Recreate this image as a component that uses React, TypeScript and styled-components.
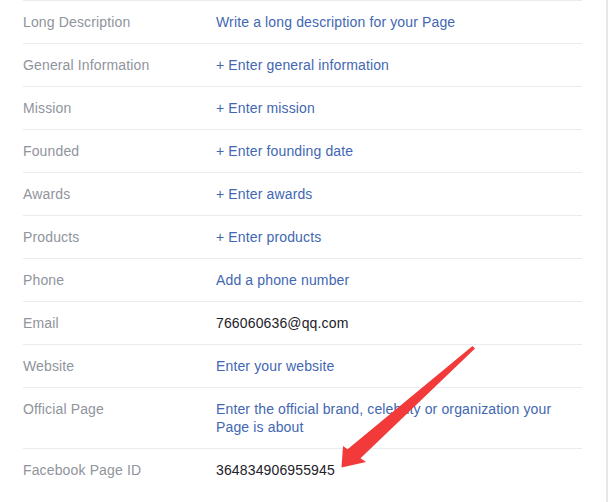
import styled, { createGlobalStyle } from "styled-components";

const Global = createGlobalStyle`
  html, body {
    margin: 0;
    padding: 0;
    background: #fff;
  }
  body {
    font-family: "Liberation Sans", Arial, Helvetica, sans-serif;
    font-size: 14px;
    letter-spacing: 0.14px;
  }
`;

const Page = styled.div`
  position: relative;
  width: 608px;
  height: 502px;
  overflow: hidden;
`;

const Card = styled.div`
  width: 583px;
  height: 502px;
  padding: 0 0 0 23px;
  border-right: 2px solid #e6e7eb;
  box-sizing: content-box;
`;

const List = styled.div`
  width: 559px;
  border-top: 1px solid #e9ebee;
`;

const Row = styled.div<{ last?: boolean }>`
  display: flex;
  align-items: flex-start;
  padding: 12px 0;
  line-height: 18px;
  border-bottom: ${(p) => (p.last ? "none" : "1px solid #e9ebee")};
`;

const Label = styled.div`
  width: 193px;
  flex-shrink: 0;
  color: #90949c;
`;

const Value = styled.div<{ kind: "link" | "text" }>`
  width: 350px;
  color: ${(p) => (p.kind === "link" ? "#4267b2" : "#1d2129")};
  cursor: ${(p) => (p.kind === "link" ? "pointer" : "default")};
`;

const Arrow = styled.svg`
  position: absolute;
  left: 0;
  top: 0;
  pointer-events: none;
`;

type Item = { label: string; value: string; kind: "link" | "text" };

const items: Item[] = [
  { label: "Long Description", value: "Write a long description for your Page", kind: "link" },
  { label: "General Information", value: "+ Enter general information", kind: "link" },
  { label: "Mission", value: "+ Enter mission", kind: "link" },
  { label: "Founded", value: "+ Enter founding date", kind: "link" },
  { label: "Awards", value: "+ Enter awards", kind: "link" },
  { label: "Products", value: "+ Enter products", kind: "link" },
  { label: "Phone", value: "Add a phone number", kind: "link" },
  { label: "Email", value: "766060636@qq.com", kind: "text" },
  { label: "Website", value: "Enter your website", kind: "link" },
  {
    label: "Official Page",
    value: "Enter the official brand, celebrity or organization your Page is about",
    kind: "link",
  },
  { label: "Facebook Page ID", value: "364834906955945", kind: "text" },
];

export default function App() {
  return (
    <Page>
      <Global />
      <Card>
        <List>
          {items.map((it, i) => (
            <Row key={it.label} last={i === items.length - 1}>
              <Label>{it.label}</Label>
              <Value kind={it.kind}>{it.value}</Value>
            </Row>
          ))}
        </List>
      </Card>
      <Arrow width="608" height="502" viewBox="0 0 608 502">
        <polygon
          points="472.5,346 475,348.5 360.5,458.2 366,462 341.5,467.5 343,446 347.6,449.2"
          fill="#f23a3a"
        />
      </Arrow>
    </Page>
  );
}
